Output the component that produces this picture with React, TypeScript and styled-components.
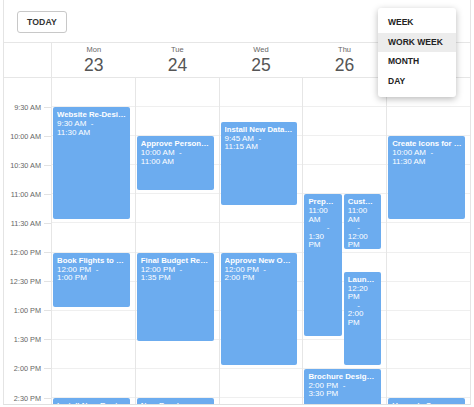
import React from 'react'
import styled, { createGlobalStyle } from 'styled-components'

const SLOT = 29.1
const DAY_START = 9 * 60
const SLOT_COUNT = 12

interface CalendarEvent {
  title: string
  start: number
  end: number
  col?: number
  cols?: number
  dashIndent?: number
}

interface Day {
  name: string
  date: number
  events: CalendarEvent[]
}

const days: Day[] = [
  {
    name: 'Mon',
    date: 23,
    events: [
      { title: 'Website Re-Design Plan', start: 570, end: 690 },
      { title: 'Book Flights to San Fran for Sales Trip', start: 720, end: 780 },
      { title: 'Install New Router in Dev Room', start: 870, end: 930 },
    ],
  },
  {
    name: 'Tue',
    date: 24,
    events: [
      { title: 'Approve Personal Computer Upgrade Plan', start: 600, end: 660 },
      { title: 'Final Budget Review', start: 720, end: 815 },
      { title: 'New Brochures', start: 870, end: 945 },
    ],
  },
  {
    name: 'Wed',
    date: 25,
    events: [
      { title: 'Install New Database', start: 585, end: 675 },
      { title: 'Approve New Online Marketing Strategy', start: 720, end: 840 },
      { title: 'Upgrade Personal Computers', start: 915, end: 990 },
    ],
  },
  {
    name: 'Thu',
    date: 26,
    events: [
      { title: 'Prepare 2015 Marketing Plan', start: 660, end: 810, col: 0, cols: 2, dashIndent: 14 },
      { title: 'Customer Workshop', start: 660, end: 720, col: 1, cols: 2, dashIndent: 5 },
      { title: 'Launch New Website', start: 740, end: 840, col: 1, cols: 2, dashIndent: 5 },
      { title: 'Brochure Design Review', start: 840, end: 930 },
    ],
  },
  {
    name: 'Fri',
    date: 27,
    events: [
      { title: 'Create Icons for Website', start: 600, end: 690 },
      { title: 'Upgrade Server Hardware', start: 870, end: 960 },
    ],
  },
]

const views = ['WEEK', 'WORK WEEK', 'MONTH', 'DAY']

const formatTime = (minutes: number) => {
  const h = Math.floor(minutes / 60)
  const m = minutes % 60
  const suffix = h >= 12 ? 'PM' : 'AM'
  const hour = h > 12 ? h - 12 : h
  return `${hour}:${m.toString().padStart(2, '0')} ${suffix}`
}

const GlobalStyle = createGlobalStyle`
  body {
    margin: 0;
    background: #fff;
    font-family: "Liberation Sans", Arial, Helvetica, sans-serif;
  }
`

const Frame = styled.div`
  position: relative;
  margin-left: 3px;
  width: 468px;
  box-sizing: border-box;
  border-left: 1px solid #e4e4e4;
  border-right: 1px solid #e4e4e4;
  border-bottom: 1px solid #e0e0e0;
`

const Toolbar = styled.div`
  display: flex;
  align-items: center;
  height: 42px;
  padding-left: 13px;
  border-bottom: 1px solid #e6e6e6;
`

const TodayButton = styled.button`
  width: 50px;
  height: 22px;
  margin-top: 2px;
  padding: 0;
  background: #fff;
  border: 1px solid #c8c8c8;
  border-radius: 3px;
  font-family: inherit;
  font-size: 8.7px;
  font-weight: 600;
  color: #333;
  letter-spacing: 0.1px;
`

const Menu = styled.div`
  position: absolute;
  top: 8px;
  left: 374px;
  z-index: 5;
  width: 78px;
  padding: 5px 0;
  background: #fff;
  border-radius: 3px;
  box-shadow: 0 2px 7px rgba(0, 0, 0, 0.28);
`

const MenuItem = styled.div<{ $active?: boolean }>`
  height: 19.7px;
  line-height: 19.7px;
  padding-left: 10px;
  font-size: 8.5px;
  font-weight: 600;
  color: #222;
  background: ${p => (p.$active ? '#ececec' : 'transparent')};
`

const HeaderRow = styled.div`
  display: flex;
  height: 34px;
  border-bottom: 1px solid #e6e6e6;
`

const TimeGutter = styled.div`
  width: 47px;
  flex: none;
  border-right: 1px solid #e6e6e6;
`

const DayHeader = styled.div`
  flex: 1;
  display: flex;
  flex-direction: column;
  align-items: center;
  padding-top: 2px;
  color: #555;
`

const DayName = styled.div`
  font-size: 7.5px;
  line-height: 10px;
  color: #666;
`

const DayNumber = styled.div`
  font-size: 17.5px;
  line-height: 20px;
  color: #555;
`

const Body = styled.div`
  display: flex;
  height: 326px;
  overflow: hidden;
`

const TimeColumn = styled.div`
  width: 47px;
  flex: none;
  display: flex;
  flex-direction: column;
  padding-top: ${SLOT / 2}px;
  border-right: 1px solid #e6e6e6;
`

const TimeCell = styled.div`
  flex: none;
  height: ${SLOT}px;
  display: flex;
  align-items: center;
  justify-content: flex-end;
  gap: 3px;
`

const TimeLabel = styled.span`
  font-size: 7.3px;
  color: #666;
`

const Tick = styled.span`
  width: 7px;
  height: 1px;
  background: #e2e2e2;
`

const DayColumn = styled.div<{ $last?: boolean }>`
  position: relative;
  flex: 1;
  display: flex;
  flex-direction: column;
  border-right: ${p => (p.$last ? 'none' : '1px solid #e6e6e6')};
`

const Cell = styled.div`
  flex: none;
  height: ${SLOT}px;
  box-sizing: border-box;
  border-bottom: 1px solid #efefef;
`

const Appointment = styled.div<{ $narrow?: boolean }>`
  position: absolute;
  box-sizing: border-box;
  padding: 3px ${p => (p.$narrow ? 4.5 : 3)}px 0 4px;
  background: #6cacef;
  border-radius: 2px;
  color: #fff;
  overflow: hidden;
`

const Title = styled.div`
  font-size: 7.8px;
  line-height: 10px;
  font-weight: 700;
  white-space: nowrap;
  overflow: hidden;
  text-overflow: ellipsis;
`

const TimeText = styled.div`
  font-size: 8px;
  line-height: 8.4px;
`

const Time = styled.span`
  display: inline-block;
`

const Dash = styled.span<{ $indent?: number }>`
  display: ${p => (p.$indent !== undefined ? 'block' : 'inline-block')};
  padding-left: ${p => p.$indent ?? 0}px;
  white-space: pre;
`

const timeLabels = Array.from({ length: SLOT_COUNT }, (_, i) => DAY_START + 30 * (i + 1))

export default function App() {
  return (
    <>
      <GlobalStyle />
      <Frame>
        <Toolbar>
          <TodayButton>TODAY</TodayButton>
        </Toolbar>
        <Menu>
          {views.map(v => (
            <MenuItem key={v} $active={v === 'WORK WEEK'}>
              {v}
            </MenuItem>
          ))}
        </Menu>
        <HeaderRow>
          <TimeGutter />
          {days.map(d => (
            <DayHeader key={d.name}>
              <DayName>{d.name}</DayName>
              <DayNumber>{d.date}</DayNumber>
            </DayHeader>
          ))}
        </HeaderRow>
        <Body>
          <TimeColumn>
            {timeLabels.map(t => (
              <TimeCell key={t}>
                <TimeLabel>{formatTime(t)}</TimeLabel>
                <Tick />
              </TimeCell>
            ))}
          </TimeColumn>
          {days.map((d, di) => (
            <DayColumn key={d.name} $last={di === days.length - 1}>
              {Array.from({ length: SLOT_COUNT }, (_, i) => (
                <Cell key={i} />
              ))}
              {d.events.map(e => {
                const cols = e.cols ?? 1
                const col = e.col ?? 0
                const top = ((e.start - DAY_START) / 30) * SLOT
                const height = ((e.end - e.start) / 30) * SLOT - 4
                return (
                  <Appointment
                    key={e.title}
                    $narrow={cols > 1}
                    style={{
                      top,
                      height,
                      left: `calc(1px + (100% - 4px) * ${col} / ${cols})`,
                      width: `calc((100% - 4px) / ${cols} - 2px)`,
                    }}
                  >
                    <Title>{e.title}</Title>
                    <TimeText>
                      <Time>{formatTime(e.start)}</Time>
                      <Dash $indent={e.dashIndent}>{'  -  '}</Dash>
                      <Time>{formatTime(e.end)}</Time>
                    </TimeText>
                  </Appointment>
                )
              })}
            </DayColumn>
          ))}
        </Body>
      </Frame>
    </>
  )
}
